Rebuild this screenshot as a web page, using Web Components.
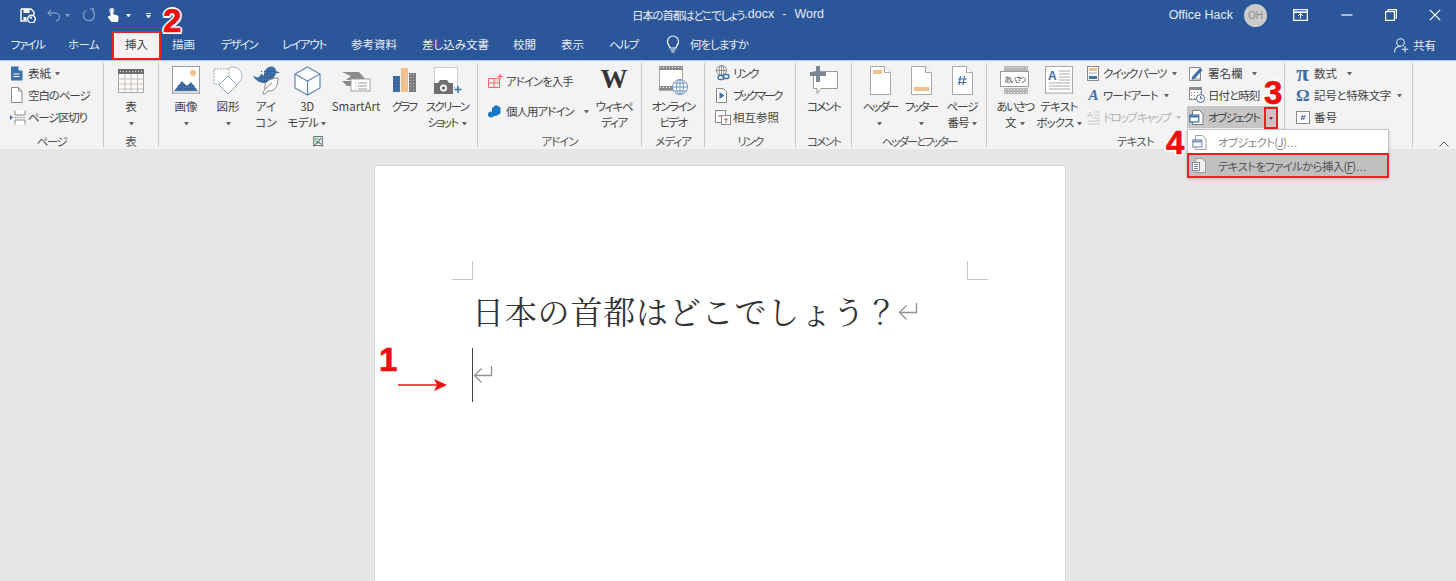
<!DOCTYPE html>
<html lang="ja"><head><meta charset="utf-8"><title>Word</title>
<style>html,body{margin:0;padding:0;background:#e6e6e6}</style></head>
<body>
<word-app>
  <title-bar></title-bar>
  <tab-bar></tab-bar>
  <word-ribbon>
    <ribbon-group label="ページ" ls="-1.5" w="104" pad="10">
      <small-col>
        <small-btn icon="cover">表紙<r-caret m="4"></r-caret></small-btn>
        <small-btn icon="blank" style="letter-spacing:-1.1px">空白のページ</small-btn>
        <small-btn icon="pbreak" style="letter-spacing:-1.3px">ページ区切り</small-btn>
      </small-col>
    </ribbon-group>
    <ribbon-group label="表" w="55" pad="0">
      <big-btn icon="table" w="54">表<br><r-caret></r-caret></big-btn>
    </ribbon-group>
    <ribbon-group label="図" w="319" pad="6">
      <big-btn icon="picture" w="42">画像<br><r-caret></r-caret></big-btn>
      <big-btn icon="shapes" w="42">図形<br><r-caret></r-caret></big-btn>
      <big-btn icon="bird" w="34">アイ<br>コン</big-btn>
      <big-btn icon="cube" w="48" style="letter-spacing:-.5px">3D<br>モデル<r-caret m="3"></r-caret></big-btn>
      <big-btn icon="smart" w="50">SmartArt</big-btn>
      <big-btn icon="chart" w="46" style="letter-spacing:-2px">グラフ</big-btn>
      <big-btn icon="shot" w="40" style="letter-spacing:-1.7px">スクリーン<br>ショット<r-caret m="4"></r-caret></big-btn>
    </ribbon-group>
    <ribbon-group label="アドイン" ls="-1" w="164" pad="10">
      <addin-col style="letter-spacing:-1px">
        <small-btn icon="getaddin">アドインを入手</small-btn>
        <small-btn icon="myaddin">個人用アドイン<r-caret m="10"></r-caret></small-btn>
      </addin-col>
      <big-btn icon="wiki" w="36" style="letter-spacing:-1.3px">ウィキペ<br>ディア</big-btn>
    </ribbon-group>
    <ribbon-group label="メディア" ls="-1" w="63" pad="0">
      <big-btn icon="video" w="62" style="letter-spacing:-1.6px">オンライン<br>ビデオ</big-btn>
    </ribbon-group>
    <ribbon-group label="リンク" ls="-1.5" w="91" pad="10">
      <small-col>
        <small-btn icon="link" style="letter-spacing:-1.8px">リンク</small-btn>
        <small-btn icon="bookmark" style="letter-spacing:-2.2px">ブックマーク</small-btn>
        <small-btn icon="xref">相互参照</small-btn>
      </small-col>
    </ribbon-group>
    <ribbon-group label="コメント" ls="-1.8" w="56" pad="0">
      <big-btn icon="comment" w="55" style="letter-spacing:-1.8px">コメント</big-btn>
    </ribbon-group>
    <ribbon-group label="ヘッダーとフッター" ls="-2" w="135" pad="7">
      <big-btn icon="header" w="42" style="letter-spacing:-2px">ヘッダー<br><r-caret></r-caret></big-btn>
      <big-btn icon="footer" w="40" style="letter-spacing:-2px">フッター<br><r-caret></r-caret></big-btn>
      <big-btn icon="pagenum" w="42" style="letter-spacing:-1px">ページ<br>番号<r-caret m="3"></r-caret></big-btn>
    </ribbon-group>
    <ribbon-group label="テキスト" ls="-.7" w="298" pad="7">
      <big-btn icon="greet" w="42" style="letter-spacing:-1.5px">あいさつ<br>文<r-caret m="5"></r-caret></big-btn>
      <big-btn icon="textbox" w="46" style="letter-spacing:-.7px">テキスト<br>ボックス<r-caret m="3"></r-caret></big-btn>
      <small-col style="margin-left:4px;width:101px;--ib:17px;--ip:1px">
        <small-btn icon="quick" style="letter-spacing:-1.5px">クイック&nbsp;パーツ<r-caret m="6"></r-caret></small-btn>
        <small-btn icon="wordart" style="letter-spacing:-1px">ワードアート<r-caret m="6"></r-caret></small-btn>
        <small-btn icon="dropcap" disabled style="letter-spacing:-1.7px">ドロップ&nbsp;キャップ<r-caret m="6" light></r-caret></small-btn>
      </small-col>
      <small-col style="--ib:21px;--ip:2px;width:91px">
        <small-btn icon="sign">署名欄<r-caret m="9"></r-caret></small-btn>
        <small-btn icon="date" style="letter-spacing:-1px">日付と時刻</small-btn>
        <split-btn><small-btn icon="object" style="letter-spacing:-1.5px">オブジェクト</small-btn></split-btn>
      </small-col>
    </ribbon-group>
    <ribbon-group label="" w="128" pad="11">
      <small-col>
        <small-btn icon="pi">数式<r-caret m="10"></r-caret></small-btn>
        <small-btn icon="omega" style="letter-spacing:-.3px">記号と特殊文字<r-caret m="6"></r-caret></small-btn>
        <small-btn icon="number">番号</small-btn>
      </small-col>
    </ribbon-group>
  </word-ribbon>
  <doc-area>
    <doc-page>
      <doc-line>日本の首都はどこでしょう？</doc-line>
    </doc-page>
  </doc-area>
  <drop-menu></drop-menu>
  <step-num n="2" x="163" y="2"></step-num>
  <step-num n="3" x="1264" y="74"></step-num>
  <step-num n="4" x="1166" y="124"></step-num>
  <step-num n="1" x="379" y="341"></step-num>
</word-app>
<script>
const B='#3f6fa8',G='#7a7a7a',O='#f2c190',L='#a8a8a8';
const svg=(w,h,s)=>`<svg xmlns="http://www.w3.org/2000/svg" width="${w}" height="${h}" viewBox="0 0 ${w} ${h}" style="display:block">${s}</svg>`;
const dots=(x,y,w,h,c='#24466f')=>{let s='';for(let j=y;j<y+h;j+=3)for(let i=x;i<x+w;i+=3)s+=`<rect x="${i}" y="${j}" width="1" height="1" fill="${c}"/>`;return s};
const ICONS={
cover:svg(13,15,`<path d="M1 .5h8l3.5 3.5v10.5H1z" fill="${B}"/><path d="M9 .5V4h3.5" fill="#fff" stroke="#fff"/><path d="M3.5 8h6M3.5 10.5h6" stroke="#fff"/>`),
blank:svg(13,16,`<path d="M1.5 .5h7l3.5 3.5v11.5H1.500z" fill="#fff" stroke="#8a8a8a"/><path d="M8.500.5V4H12" fill="none" stroke="#8a8a8a"/>`),
pbreak:svg(16,15,`<path d="M0 5l3 2.500L0 10z" fill="${B}"/><path d="M5 .5v4.500h10V.5M5 14.500V10h10v4.500" fill="#fff" stroke="#8a8a8a"/><path d="M4 7.500h11" stroke="#a0a0a0" stroke-dasharray="2 1"/>`),
table:svg(26,24,`<rect x=".5" y=".5" width="25" height="23" fill="#fafafa" stroke="#a8a8a8"/><rect y="0" width="26" height="5" fill="#6e6e6e"/>${dots(2,2,23,1,'#ddd')}<path d="M.5 10h25M.5 15h25M.5 20h25M7 5v18M13 5v18M19.500 5v18" stroke="#c7bdb3"/>`),
picture:svg(28,29,`<rect x=".5" y=".5" width="27" height="27" fill="#fff" stroke="#9a9a9a"/><rect x="1" y="25" width="26" height="2.500" fill="#d8d8d8"/><circle cx="21" cy="7" r="3" fill="${O}"/><path d="M2 25l8-10 5 5 4-4 7 9z" fill="${B}"/>${dots(6,19,18,6)}`),
shapes:svg(30,29,`<circle cx="20" cy="10" r="9" fill="#fff" stroke="#a9b8cf"/><rect x="1" y="3" width="15" height="15" fill="#fff" stroke="#a9a9a9" stroke-dasharray="2 1"/><path d="M15 10l9 9-9 9-9-9z" fill="#fff" stroke="#8ea6c6"/>`),
bird:svg(28,29,`<path d="M1 10c3 1 4 2 6 1 1-2 2-3 4-2l1 .5c0-5 3-9 7-9 3 0 5 2 5 4.500l4 1.500-4 1c-1 3-3 5-6 7-2 3-6 3-9 2-4-1-7-4-8-7z" fill="${B}"/>${dots(9,5,14,12)}<path d="M11 28c0-2 1-3 2-5-1-6 2-10 13-11 0 8-3 13-9 13-1 0-3 1-4 3z" fill="#fff" stroke="#8a8a8a"/><path d="M13 23l7-6" stroke="#8a8a8a"/>`),
cube:svg(27,30,`<path d="M13.500 1L26 8v14l-12.500 7L1 22V8z" fill="#fff" stroke="#5f86b8" stroke-width="1.200"/><path d="M1 8l12.500 7L26 8M13.500 15v14" fill="none" stroke="#5f86b8" stroke-width="1.200"/>`),
smart:svg(30,24,`<path d="M1 3h17l7 8H5l5-4z" fill="#8b8b8b"/><path d="M1 12l5 5h6v-5z" fill="#8b8b8b"/><rect x="10" y="10" width="19" height="12" fill="#fff" stroke="#a0a0a0"/><path d="M14 14h1M17 14h9M14 17h1M17 17h9M14 20h1M17 20h9" stroke="#9a9a9a"/>`),
chart:svg(25,27,`<rect x="1" y="9" width="7" height="16" fill="${B}"/>${dots(2,10,6,14)}<rect x="9" y="1" width="7" height="24" fill="${O}"/><rect x="17" y="6" width="7" height="19" fill="#7c7c7c"/>${dots(18,7,6,17,'#b8b8b8')}`),
shot:svg(29,29,`<rect x="1.500" y="1.500" width="23" height="20" fill="#fff" stroke="#b9b9b9" stroke-dasharray="2 1"/><path d="M1 17h4l2-3h7l2 3h4v11H1z" fill="#6f6f6f"/><circle cx="10.500" cy="22" r="3.500" fill="#fff"/><circle cx="10.500" cy="22" r="1.800" fill="#6f6f6f"/><path d="M25 20v7M21.500 23.500h7" stroke="${B}" stroke-width="1.500"/>`),
getaddin:svg(15,14,`<path d="M.5 4.500h11v9H.5zM6 4.500v9M.5 9h11" fill="none" stroke="#ea6a6a"/><path d="M7 3.500h4v4h-4" fill="${O}" opacity=".5"/><path d="M12 0v5M9.500 2.500h5" stroke="#e05050"/>`),
myaddin:svg(13,13,`<path d="M4 3l4-3 4.500 2.500v6L8 11H4z" fill="#1976c4"/><circle cx="3" cy="9.500" r="3" fill="#1976c4"/>`),
video:svg(29,29,`<rect x=".5" y=".5" width="23" height="24" fill="#fff" stroke="#aaa"/><rect x="0" y="0" width="24" height="4" fill="#8a8a8a"/><rect x="0" y="20" width="15" height="4" fill="#8a8a8a"/>${dots(1,1,22,1,'#fff')}${dots(1,21,13,1,'#fff')}<circle cx="21" cy="21" r="7.500" fill="#fff" stroke="#6d93c2"/><path d="M13.500 21h15M21 13.500v15M15 17h12M15 25h12" stroke="#6d93c2" fill="none"/><ellipse cx="21" cy="21" rx="3.500" ry="7.500" fill="none" stroke="#6d93c2"/>`),
link:svg(15,16,`<circle cx="6.500" cy="5.500" r="5" fill="#fff" stroke="#8a8a8a"/><path d="M1.500 5.500h10M6.500.5v10" stroke="#8a8a8a"/><ellipse cx="6.500" cy="5.500" rx="2.300" ry="5" fill="none" stroke="#8a8a8a"/><rect x="3" y="10.500" width="6" height="4" rx="2" fill="none" stroke="${B}" stroke-width="1.300"/><rect x="8" y="9.500" width="6" height="4" rx="2" fill="none" stroke="${B}" stroke-width="1.300"/>`),
bookmark:svg(13,15,`<path d="M1.500.5h7l3 3v11h-10z" fill="#fff" stroke="#8a8a8a"/><path d="M4.500 4l5 3.500-5 3.500z" fill="${B}"/>`),
xref:svg(16,15,`<rect x=".5" y=".5" width="10" height="12" fill="#fff" stroke="#8a8a8a"/><rect x="6.500" y="5.500" width="9" height="9" fill="#fff" stroke="#8a8a8a"/><path d="M3 6h4M11 8v5M9.500 9.500h3" stroke="#d9534f"/>`),
comment:svg(30,29,`<path d="M4.500 5.500h24v17H12l-4 5v-5H4.500z" fill="#fff" stroke="#9a9a9a" stroke-linejoin="round"/><path d="M7 0h4v6h6v4h-6v6H7v-6H1V6h6z" fill="#7a8797"/>`),
header:svg(21,29,`<path d="M.5.500h14l6 6v22H.5z" fill="#fff" stroke="#a8a8a8"/><path d="M14.500.5v6h6" fill="#fff" stroke="#a8a8a8"/><rect x="3" y="4" width="9" height="4" fill="${O}"/>`),
footer:svg(21,29,`<path d="M.5.500h14l6 6v22H.5z" fill="#fff" stroke="#a8a8a8"/><path d="M14.500.5v6h6" fill="#fff" stroke="#a8a8a8"/><rect x="3" y="21" width="15" height="4" fill="${O}"/>`),
pagenum:svg(21,29,`<path d="M.5.500h14l6 6v22H.5z" fill="#fff" stroke="#a8a8a8"/><path d="M14.500.5v6h6" fill="#fff" stroke="#a8a8a8"/><path d="M8.500 10l-1.500 9M12.500 10l-1.500 9M6 13h9M5.500 16.500h9" stroke="${B}" stroke-width="1.200"/>`),
greet:svg(31,29,`<rect x="4" y="0" width="24" height="5" fill="#b5b5b5"/><rect x="4" y="22" width="24" height="6" fill="#b5b5b5"/>${dots(5,1,22,3,'#eee')}${dots(5,23,22,5,'#eee')}<rect x=".5" y="5.500" width="28" height="15" fill="#fff" stroke="#9a9a9a"/><text x="14.500" y="16" font-size="7" text-anchor="middle" fill="#444" font-family="Noto Sans CJK JP">あいさつ</text>`),
textbox:svg(28,29,`<rect x=".5" y=".5" width="27" height="27" fill="#fff" stroke="#a8a8a8"/><rect x="1" y="26" width="26" height="1.500" fill="#ddd"/><text x="7" y="14" font-size="12" font-weight="bold" text-anchor="middle" fill="${B}" font-family="Liberation Sans">A</text><path d="M14 5h11M14 8h11M14 11h11M14 14h11M4 17h21M4 20h21M4 23h21" stroke="#a8a8a8"/>`),
quick:svg(13,15,`<rect x=".5" y=".5" width="11" height="14" fill="#fff" stroke="#8a8a8a"/><rect x="2" y="2" width="8" height="3" fill="${O}"/><rect x="2" y="10" width="8" height="3" fill="${B}"/><path d="M2 7h8" stroke="#aaa"/>`),
wordart:`<span style="font:italic bold 15px/15px 'Liberation Serif',serif;color:${B};display:block;width:12px;text-align:center">A</span>`,
dropcap:svg(14,15,`<text x="0" y="8" font-size="9" fill="#bcbcbc" font-family="Liberation Sans">A</text><path d="M7 2h6M7 5h6M7 8h6M1 11h12M1 14h12" stroke="#c8c8c8"/>`),
sign:svg(15,15,`<path d="M.5 1.500h11v13H.5z" fill="#fff" stroke="#8a8a8a"/><path d="M3 11l8-9 2.500 2-8 9-3 1z" fill="${B}"/><path d="M3 13h8" stroke="#8a8a8a"/>`),
date:svg(16,16,`<rect x=".5" y=".5" width="12" height="12" fill="#fff" stroke="#8a8a8a"/><rect y="0" width="13" height="3" fill="#8a8a8a"/>${dots(2,5,10,8,'#c77')}<circle cx="11.500" cy="11.500" r="4" fill="#fff" stroke="${B}"/><path d="M11.500 9v2.500h2" fill="none" stroke="${B}"/>`),
object:svg(15,15,`<path d="M3.500 .5h7l3.500 3.500v10.500H3.500z" fill="#fff" stroke="#7a7a7a"/><rect x=".8" y="5" width="9" height="7" fill="#fff" stroke="${B}" stroke-width="1.200"/><path d="M1 6.500h8.500" stroke="${B}" stroke-width="2"/>`),
objectdim:svg(15,15,`<path d="M3.500 .5h7l3.500 3.500v10.500H3.500z" fill="#fff" stroke="#a0a0a0"/><rect x=".8" y="5" width="9" height="7" fill="#fff" stroke="#7e94b4" stroke-width="1.200"/><path d="M1 6.500h8.500" stroke="#7e94b4" stroke-width="2"/>`),
insfile:svg(14,15,`<path d="M3.500 .5h6.500l3.500 3.500v10.500H3.500z" fill="#eee" stroke="#9a9a9a"/><rect x=".5" y="4.500" width="7" height="8" fill="#fff" stroke="#8a8a8a"/><path d="M2 6.500h4M2 8.500h4M2 10.500h4" stroke="#5f7fa8"/>`),
pi:`<span style="font:bold 23px/15px 'Liberation Serif',serif;color:${B};display:block;width:13px;text-align:center">π</span>`,
omega:`<span style="font:bold 17px/15px 'Liberation Serif',serif;color:${B};display:block;width:13px;text-align:center">Ω</span>`,
number:svg(15,13,`<rect x=".5" y=".5" width="13" height="12" fill="#fff" stroke="#8a8a8a"/><path d="M6.500 4l-1 5M8.500 4l-1 5M5 5.500h4.500M4.500 7.500h4.500" stroke="#5f7fa8"/>`),
wiki:`<span style="font:bold 27px/27px 'Liberation Serif',serif;color:#333;display:block;letter-spacing:0;margin-top:-3px">W</span>`,
save:svg(16,15,`<path d="M1 1h10l3 3v3" fill="none" stroke="#fff" stroke-width="1.400"/><path d="M1 1v12h6" fill="none" stroke="#fff" stroke-width="1.400"/><rect x="3.500" y="1" width="6" height="4" fill="#fff"/><rect x="3.500" y="9" width="3" height="3" fill="#fff"/><circle cx="11.500" cy="11" r="3.800" fill="none" stroke="#fff" stroke-width="1.400"/><path d="M9 9l3-.5-.5 3z" fill="#fff"/>`),
undo:svg(15,14,`<path d="M4 2L1 5l3 3" fill="none" stroke="#7f9bc6" stroke-width="1.300"/><path d="M1.500 5H8a4 4 0 0 1 1 8" fill="none" stroke="#7f9bc6" stroke-width="1.300"/>`),
redo:svg(14,14,`<path d="M10.500 3A5.500 5.500 0 1 1 4 2.500" fill="none" stroke="#7f9bc6" stroke-width="1.300"/><path d="M8 1h3.500v3.500" fill="none" stroke="#7f9bc6" stroke-width="1.300"/>`),
touch:svg(12,15,`<path d="M3.500 7V2a1.300 1.300 0 0 1 2.600 0v4l4.400 1.500c1 .4 1 1.200 1 2.500L11 14H4.500L1 9.500c-.6-1 .6-2 1.500-1.200z" fill="#fff"/><circle cx="4.800" cy="2.500" r="2.300" fill="none" stroke="#fff" stroke-width=".8"/>`),
bulb:svg(16,19,`<path d="M5 13c0-2-2.500-3-2.500-6.500a5.500 5.500 0 0 1 11 0C13.500 10 11 11 11 13z" fill="none" stroke="#fff" stroke-width="1.200"/><path d="M5.500 15h5M6.500 17h3" stroke="#fff" stroke-width="1.200"/>`),
share:svg(15,15,`<circle cx="6.500" cy="4.500" r="3.800" fill="none" stroke="#dfe6f1" stroke-width="1.100"/><path d="M.5 14.500c0-4 2.500-6 6-6" fill="none" stroke="#dfe6f1" stroke-width="1.100"/><path d="M11 8v6.500M7.800 11.300h6.500" stroke="#dfe6f1" stroke-width="1.100"/>`),
rdisp:svg(15,12,`<path d="M.7.700h13.600v10.600H.7z" fill="none" stroke="#fff" stroke-width="1.200"/><path d="M1 3.200h13" stroke="#fff" stroke-width="1.600"/><path d="M7.500 9.500V5M5 7l2.500-2.500L10 7" fill="none" stroke="#fff"/>`),
min:svg(12,12,`<path d="M.5 6h11" stroke="#fff" stroke-width="1.200"/>`),
restore:svg(12,12,`<rect x=".6" y="2.600" width="8.800" height="8.800" fill="none" stroke="#fff" stroke-width="1.200"/><path d="M3 2.500V.6h8.400V9H9.500" fill="none" stroke="#fff" stroke-width="1.200"/>`),
close:svg(12,12,`<path d="M.8.800l10.400 10.400M11.200.800L.8 11.200" stroke="#fff" stroke-width="1.200"/>`),
ret:svg(20,19,`<path d="M18.500 1v9.500H2" fill="none" stroke="#8f8f8f" stroke-width="1.300"/><path d="M8.500 3.500L1.500 10.500l7 7" fill="none" stroke="#8f8f8f" stroke-width="1.300"/>`),
};
const FONT=`"Noto Sans CJK JP","Noto Sans",sans-serif`;
const tag=(n,c)=>customElements.define(n,c);
class El extends HTMLElement{
  constructor(){super();this.attachShadow({mode:'open'});}
  render(css,html){this.shadowRoot.innerHTML=`<style>${css}</style>${html}`;}
}
tag('word-app',class extends El{connectedCallback(){this.render(`:host{display:flex;flex-direction:column;position:relative;width:1456px;height:581px;overflow:hidden;background:#e6e6e6;font-family:${FONT};font-feature-settings:"palt";color:#444}`,`<slot></slot>`)}});
tag('title-bar',class extends El{connectedCallback(){
  const ic=n=>ICONS[n];
  this.render(`:host{flex:0 0 30px;display:grid;grid-template-columns:1fr auto 1fr;align-items:center;background:#2b579a;color:#e6ebf4;font-size:12px}
  .l,.r{display:flex;align-items:center}.l{padding-left:20px}.r{justify-content:flex-end}
  .title{font-size:11.5px;white-space:pre;display:flex}
  .title b{font-weight:400;letter-spacing:-1.2px}
  .title i{font:12.500px "Liberation Sans",sans-serif}
  .user{font:12.500px "Liberation Sans",sans-serif;margin-right:11px;white-space:nowrap}
  .av{width:23px;height:23px;border-radius:50%;background:#cbcbcb;color:#8b8b8b;font:10px/23px "Liberation Sans",sans-serif;text-align:center;margin-right:26px}
  .c{width:5px;height:3px;margin:0;border:solid transparent;border-width:3px 2.500px 0;border-top-color:#e6ebf4;box-sizing:border-box}`,
  `<div class="l"><span style="margin-right:11px">${ic('save')}</span><span style="margin-right:3px">${ic('undo')}</span><span class="c" style="border-top-color:#7f9bc6;margin-right:12px"></span><span style="margin-right:11px">${ic('redo')}</span><span style="margin-right:7px">${ic('touch')}</span><span class="c" style="margin-right:15px"></span><span style="display:flex;flex-direction:column;gap:1px;align-items:center"><span style="width:5px;height:1px;background:#e6ebf4"></span><span class="c"></span></span></div>
  <div class="title"><b>日本の首都はどこでしょう</b><i>.docx</i><i style="margin:0 8px">-</i><i>Word</i></div>
  <div class="r"><span class="user">Office Hack</span><span class="av">OH</span><span style="margin-right:33px">${ic('rdisp')}</span><span style="margin-right:32px">${ic('min')}</span><span style="margin-right:32px">${ic('restore')}</span><span style="margin-right:15px">${ic('close')}</span></div>`);
}});
tag('tab-bar',class extends El{connectedCallback(){
  const tabs=[['ファイル',55,-1.5],['ホーム',57,-.6],['挿入',49,0],['描画',45,0],['デザイン',66,-1.5],['レイアウト',64,-1.2],['参考資料',76,0],['差し込み文書',87,0],['校閲',51,0],['表示',45,0],['ヘルプ',57,-1.3]];
  this.render(`:host{flex:0 0 30px;display:flex;align-items:stretch;background:#2b579a;color:#e9edf5;font-size:11.500px;position:relative}
  .t{display:flex;align-items:center;justify-content:center;white-space:nowrap;box-sizing:border-box;padding-bottom:2px}
  .a{background:#f3f3f3;color:#444;outline:2px solid #e8211c;outline-offset:-2px;margin-top:1px;padding-bottom:3px}
  .tell{display:flex;align-items:center;margin-left:13px;gap:9px;padding-bottom:2px;letter-spacing:-1px}
  .sh{margin-left:auto;display:flex;align-items:center;gap:4px;margin-right:20px}`,
  tabs.map(([t,w,s])=>`<div class="t${t==='挿入'?' a':''}" style="width:${w}px;letter-spacing:${s}px">${t}</div>`).join('')+
  `<div class="tell">${ICONS.bulb}<span>何をしますか</span></div><div class="sh">${ICONS.share}<span>共有</span></div>`);
}});
tag('word-ribbon',class extends El{connectedCallback(){this.render(`:host{flex:0 0 90px;box-sizing:border-box;display:flex;align-items:flex-start;background:#f3f3f3;border-top:1px solid #b5c3dc;border-bottom:1px solid #e6e6e6;padding-top:2px;position:relative;font-size:11.500px}
  .col{position:absolute;left:1439px;top:80px;width:10px;height:6px}`,`<slot></slot><svg class="col" viewBox="0 0 10 6"><path d="M.5 5.500L5 1l4.500 4.500" fill="none" stroke="#666"/></svg>`)}});
tag('ribbon-group',class extends El{connectedCallback(){
  const w=this.getAttribute('w'),p=this.getAttribute('pad'),l=this.getAttribute('label'),s=this.getAttribute('ls')||0;
  this.render(`:host{flex:0 0 ${w}px;box-sizing:border-box;height:84px;display:flex;flex-direction:column;border-right:1px solid #c8c8c8}
  .c{flex:1;display:flex;align-items:flex-start;padding-left:${p}px;min-height:0}
  .l{flex:0 0 11px;line-height:11px;text-align:center;color:#555;font-size:11.500px;white-space:nowrap;letter-spacing:${s}px}`,`<div class="c"><slot></slot></div><div class="l">${l}</div>`);
}});
tag('big-btn',class extends El{connectedCallback(){
  this.render(`:host{flex:0 0 ${this.getAttribute('w')}px;min-width:0;display:flex;flex-direction:column;align-items:center;white-space:nowrap}
  .i{height:35px;display:flex;align-items:center;justify-content:center}
  .t{line-height:16px;text-align:center;color:#444}`,`<div class="i">${ICONS[this.getAttribute('icon')]}</div><div class="t"><slot></slot></div>`);
}});
tag('small-col',class extends El{connectedCallback(){this.render(`:host{display:grid;grid-auto-rows:22px;margin-top:-1px;min-width:0;flex:none}`,`<slot></slot>`)}});
tag('addin-col',class extends El{connectedCallback(){this.render(`:host{flex:0 0 108px;min-width:0;display:flex;flex-direction:column;gap:8px;padding-top:7px}`,`<slot></slot>`)}});
tag('small-btn',class extends El{connectedCallback(){
  const d=this.hasAttribute('disabled');
  this.render(`:host{display:flex;align-items:center;white-space:nowrap;height:22px;color:${d?'#b4b4b4':'#444'}}
  .i{flex:0 0 var(--ib,18px);box-sizing:border-box;padding-left:var(--ip,0);display:flex;align-items:center}`,`<div class="i">${ICONS[this.getAttribute('icon')]}</div><slot></slot>`);
}});
tag('split-btn',class extends El{connectedCallback(){this.render(`:host{display:flex;align-items:center;background:#c6c6c6;width:91px;height:22px;position:relative}
  .s{position:absolute;left:77px;top:1px;width:14px;height:22px;box-sizing:border-box;border:2px solid #e8211c;display:flex;align-items:center;justify-content:center}
  i{display:block;border:solid transparent;border-width:3px 2.500px 0;border-top-color:#444}`,`<slot></slot><div class="s"><i></i></div>`)}});
tag('r-caret',class extends El{connectedCallback(){
  const m=this.getAttribute('m')||0,c=this.hasAttribute('light')?'#c4c4c4':'#666';
  this.render(`:host{display:inline-block;vertical-align:middle;margin-left:${m}px;width:5px;height:3px;border-top:3px solid ${c};border-left:2.500px solid transparent;border-right:2.500px solid transparent;box-sizing:border-box}`,``);
}});
tag('doc-area',class extends El{connectedCallback(){this.render(`:host{flex:1;display:flex;justify-content:center;padding:15px 16px 0 0;min-height:0;background:#e6e6e6}`,`<slot></slot>`)}});
tag('doc-page',class extends El{connectedCallback(){this.render(`:host{box-sizing:border-box;width:692px;height:500px;background:#fff;border:1px solid #d6d6d6;padding:95px 0 0 0;display:block}
  .marks{display:flex;justify-content:space-between;padding:0 77px}
  .m{width:20px;height:18px;border-bottom:1px solid #c6c6c6}
  .a{border-right:1px solid #c6c6c6}.b{border-left:1px solid #c6c6c6}
  .body{padding:8px 0 0 97px}
  .cur{margin-top:16px;height:54px;width:30px;border-left:1px solid #444;padding-top:17px;box-sizing:border-box}`,
  `<div class="marks"><div class="m a"></div><div class="m b"></div></div><div class="body"><slot></slot><div class="cur">${ICONS.ret}</div></div>`)}});
tag('doc-line',class extends El{connectedCallback(){this.render(`:host{display:flex;align-items:center;height:44px;font:32px/44px "Noto Serif CJK JP","Noto Sans CJK JP",serif;font-feature-settings:normal;letter-spacing:.8px;color:#333;white-space:nowrap}
  span{margin:2px 0 0 0;display:block}`,`<slot></slot><span>${ICONS.ret}</span>`)}});
tag('drop-menu',class extends El{connectedCallback(){this.render(`:host{position:absolute;left:1187px;top:129px;width:202px;height:49px;box-sizing:border-box;background:#fff;border:1px solid #c6c6c6;box-shadow:0 1px 3px rgba(0,0,0,.2);font-size:11.500px;padding-top:1px;letter-spacing:-.7px}
  .r{display:flex;align-items:center;height:22px;box-sizing:border-box;padding-left:4px;white-space:nowrap;color:#8a8a8a}
  .i{flex:0 0 26px;display:flex}
  .s{height:25px;margin:0 -1px;background:#c0c0c0;border:2px solid #e8211c;padding-left:3px;color:#555}
  u{text-underline-offset:2px}
  em{font:11.500px "Liberation Sans",sans-serif;letter-spacing:0}`,
  `<div class="r"><div class="i">${ICONS.objectdim}</div><span>オブジェクト(<u>J</u>)<em>…</em></span></div><div class="r s"><div class="i">${ICONS.insfile}</div><span>テキストをファイルから挿入(<u>F</u>)<em>…</em></span></div>`)}});
tag('step-num',class extends El{connectedCallback(){
  const n=this.getAttribute('n');
  this.render(`:host{position:absolute;left:${this.getAttribute('x')}px;top:${this.getAttribute('y')}px;font:bold 33px/38px "Liberation Sans",sans-serif;color:#f00d0d;-webkit-text-stroke:.7px #f00d0d;text-shadow:-2px 0 #fff,2px 0 #fff,0 -2px #fff,0 2px #fff,-1.500px -1.500px #fff,1.500px -1.500px #fff,-1.500px 1.500px #fff,1.500px 1.500px #fff}
  ${n==='1'?'svg{position:absolute;left:19px;top:37px}':''}`,`${n}${n==='1'?`<svg width="50" height="14" viewBox="0 0 50 14"><path d="M0 7h40" stroke="#f01010" stroke-width="1.500"/><path d="M36 1l13 6-13 6 3-6z" fill="#f01010"/></svg>`:''}`);
}});
</script>
</body></html>
